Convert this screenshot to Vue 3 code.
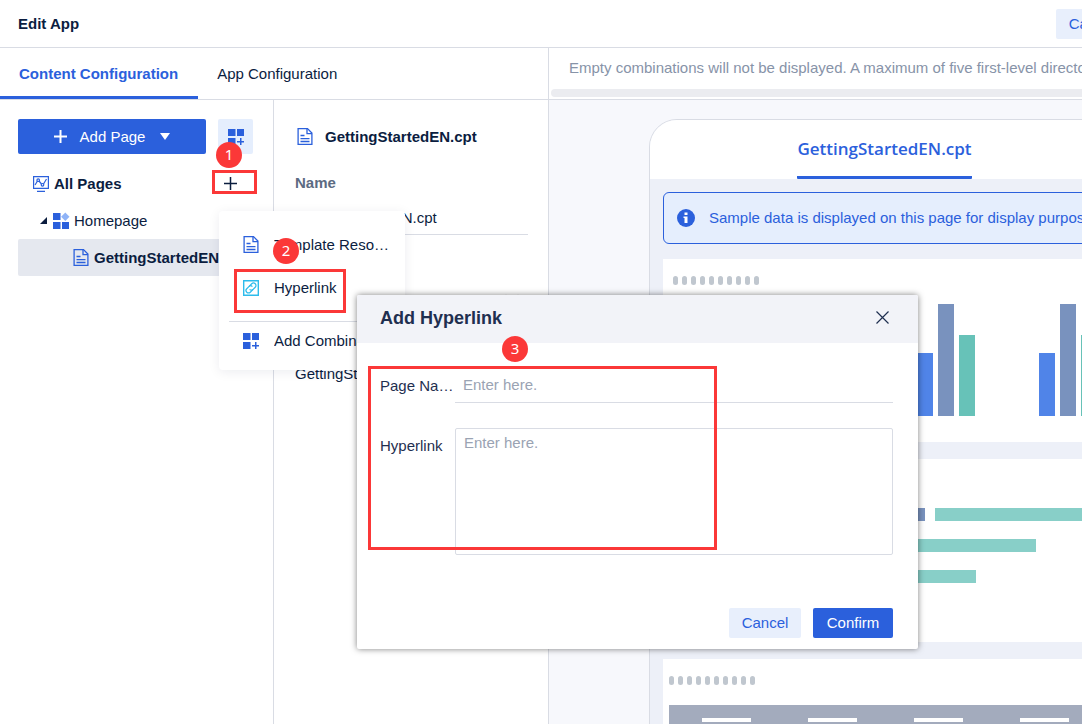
<script setup>
import { ref } from 'vue'

const tabs = ['Content Configuration', 'App Configuration']
const activeTab = ref(0)

const pageName = ref('')
const link = ref('')

// 預覽柱狀圖
const columnGroups = 4
const columns = [
  { height: 63, class: 'blue' },
  { height: 112, class: 'slate' },
  { height: 81, class: 'teal' }
]

// 預覽條形圖
const rows = [
  [{ width: 252, class: 'slate' }, { width: 164, class: 'mint' }],
  [{ width: 363, class: 'mint' }],
  [{ width: 303, class: 'mint' }]
]
</script>

<template>
  <div class="page">
    <div class="shell">
      <header class="topbar">
        <h1>Edit App</h1>
        <button class="btn btn-light" type="button">Cancel</button>
      </header>

      <div class="columns">
        <section class="config">
          <nav class="tabs">
            <button
              v-for="(tab, i) in tabs"
              :key="tab"
              type="button"
              class="tab"
              :class="{ active: activeTab === i }"
              @click="activeTab = i"
            >{{ tab }}</button>
          </nav>

          <div class="panels">
            <aside class="sidebar">
              <div class="toolbar">
                <button class="add-page" type="button">
                  <svg width="13" height="13" viewBox="0 0 13 13" stroke="currentColor" stroke-width="2"><path d="M6.500 0v13M0 6.500h13" /></svg>
                  <span>Add Page</span>
                  <svg class="drop" width="10" height="7" viewBox="0 0 10 7" fill="currentColor"><path d="M0 0h10L5 7z" /></svg>
                </button>
                <button class="combo" type="button" aria-label="Add Combination">
                  <svg class="icon" viewBox="0 0 16 16" fill="currentColor"><path d="M0 0h7.500v7H0zM9 0h7v7H9zM0 9h7.500v7H0zM12 9h1.500v3H16v1.500h-2.500V16H12v-2.500H9V12h3z" /></svg>
                </button>
              </div>

              <div class="node root">
                <svg class="icon" viewBox="0 0 16 16" fill="none" stroke="currentColor" stroke-width="1.200"><path d="M.6.6h14.800v11.800H.6zM4 15.400h8" /><path d="M2 9l2.500-4M6 5l2.500 3M10.500 8L13.500 3" /><circle cx="5.200" cy="4.200" r="1.300" /><circle cx="9.500" cy="8.800" r="1.300" /></svg>
                <span>All Pages</span>
                <button class="plus" type="button" aria-label="Add">
                  <svg width="13" height="13" viewBox="0 0 13 13" stroke="currentColor" stroke-width="1.500"><path d="M6.500 0v13M0 6.500h13" /></svg>
                </button>
              </div>
              <div class="node home">
                <svg class="caret" viewBox="0 0 7 7" fill="currentColor"><path d="M7 0v7H0z" /></svg>
                <svg class="icon" viewBox="0 0 16 16" fill="currentColor"><path d="M0 0h7.500v7H0zM0 9h7.500v7H0zM9 9h7v7H9z" /><path d="M12.300-.5l4.200 4.200-4.200 4.200-4.200-4.200z" fill="#8fb3f7" /></svg>
                <span>Homepage</span>
              </div>
              <div class="node leaf">
                <svg class="icon doc" viewBox="0 0 15 17" fill="none" stroke="currentColor" stroke-width="1.300"><path d="M.6.600h9.400l4.400 4.400v11.400H.6z" /><path d="M9.500.600v5h5M3 7.500h4M3 10.700h9M3 13.500h9" /></svg>
                <span>GettingStartedEN.cpt</span>
              </div>
            </aside>

            <section class="detail">
              <h2>
                <svg class="icon doc" viewBox="0 0 15 17" fill="none" stroke="currentColor" stroke-width="1.300"><path d="M.6.600h9.400l4.400 4.400v11.400H.6z" /><path d="M9.500.600v5h5M3 7.500h4M3 10.700h9M3 13.500h9" /></svg>
                <span>GettingStartedEN.cpt</span>
              </h2>
              <div class="caption">Name</div>
              <div class="value lined">GettingStartedEN.cpt</div>
              <div class="template-row">
                <svg width="22" height="14" viewBox="0 0 22 14" fill="none" stroke="currentColor" stroke-width="1.500"><path d="M2 8l4-5 4 5M14 8l4-5 4 5" /></svg>
              </div>
              <div class="value">GettingStartedEN.cpt</div>
            </section>
          </div>
        </section>

        <section class="preview">
          <div class="notice">
            <p>Empty combinations will not be displayed. A maximum of five first-level directories</p>
            <div class="scrollbar"></div>
          </div>

          <div class="stage">
            <div class="device">
              <div class="device-head"><span>GettingStartedEN.cpt</span></div>
              <div class="device-body">
                <div class="alert">
                  <svg width="18" height="18" viewBox="0 0 18 18"><circle cx="9" cy="9" r="9" fill="#2b60dc" /><path d="M7.500 3.500h3v2.500h-3zM6.500 7.500h4v6.500h-3V9h-1z" fill="#fff" /></svg>
                  <span>Sample data is displayed on this page for display purposes</span>
                </div>

                <div class="card">
                  <div class="dots"><i v-for="n in 10" :key="n"></i></div>
                  <div class="bar-chart">
                    <div v-for="g in columnGroups" :key="g" class="bar-group">
                      <i v-for="c in columns" :key="c.class" :class="c.class" :style="{ height: c.height + 'px' }"></i>
                    </div>
                  </div>
                </div>

                <div class="card row-chart">
                  <div v-for="(row, i) in rows" :key="i" class="bar-row">
                    <i v-for="b in row" :key="b.class" :class="b.class" :style="{ width: b.width + 'px' }"></i>
                  </div>
                </div>

                <div class="card table-card">
                  <div class="dots"><i v-for="n in 10" :key="n"></i></div>
                  <div class="table-head"><i v-for="n in 4" :key="n"></i></div>
                </div>
              </div>
            </div>
          </div>
        </section>
      </div>
    </div>

    <div class="menu">
      <button type="button" class="menu-item">
        <svg class="icon doc" viewBox="0 0 15 17" fill="none" stroke="currentColor" stroke-width="1.300"><path d="M.6.600h9.400l4.400 4.400v11.400H.6z" /><path d="M9.500.600v5h5M3 7.500h4M3 10.700h9M3 13.500h9" /></svg>
        <span>Template Resource</span>
      </button>
      <button type="button" class="menu-item">
        <svg class="icon cyan" viewBox="0 0 16 16" fill="none" stroke="currentColor"><path d="M.7.7h14.600v14.600H.7z" stroke-width="1.400" /><g transform="rotate(-45 8 8)" stroke-width="1.200"><path d="M8.500 10.500H4.500a2.500 2.500 0 0 1 0-5h3a2.500 2.500 0 0 1 2.500 2.500" /><path d="M7.500 5.500h4a2.500 2.500 0 0 1 0 5h-3A2.500 2.500 0 0 1 6 8" /></g></svg>
        <span>Hyperlink</span>
      </button>
      <hr />
      <button type="button" class="menu-item">
        <svg class="icon" viewBox="0 0 16 16" fill="currentColor"><path d="M0 0h7.500v7H0zM9 0h7v7H9zM0 9h7.500v7H0zM12 9h1.500v3H16v1.500h-2.500V16H12v-2.500H9V12h3z" /></svg>
        <span>Add Combination</span>
      </button>
    </div>

    <form class="dialog" role="dialog" aria-labelledby="dialog-title" @submit.prevent>
      <header>
        <h2 id="dialog-title">Add Hyperlink</h2>
        <button type="button" class="close" aria-label="Close">
          <svg width="13" height="13" viewBox="0 0 13 13" stroke="currentColor" stroke-width="1.200"><path d="M.5.5l12 12M12.500.5l-12 12" /></svg>
        </button>
      </header>
      <div class="fields">
        <label for="page-name">Page Name</label>
        <input id="page-name" v-model="pageName" type="text" placeholder="Enter here." />
        <label for="page-link">Hyperlink</label>
        <textarea id="page-link" v-model="link" placeholder="Enter here."></textarea>
      </div>
      <footer>
        <button type="button" class="btn btn-light">Cancel</button>
        <button type="submit" class="btn btn-primary">Confirm</button>
      </footer>
    </form>

    <!-- 步驟標註 -->
    <div class="mark mark-1"></div>
    <div class="mark mark-2"></div>
    <div class="mark mark-3"></div>
    <span class="step step-1">1</span>
    <span class="step step-2">2</span>
    <span class="step step-3">3</span>
  </div>
</template>

<style>
body {
  background: #fff;
}
</style>

<style scoped>
* {
  box-sizing: border-box;
}

.page {
  position: relative;
  height: 100vh;
  overflow: hidden;
  font-family: "Liberation Sans", Arial, sans-serif;
  font-size: 15px;
  line-height: 20px;
  color: #0b1d3f;
}

.shell {
  display: flex;
  flex-direction: column;
  min-width: 1220px;
  height: 100%;
}

h1, h2, p {
  margin: 0;
  font-size: 15px;
}

button, input, textarea {
  font: inherit;
  color: inherit;
  border: none;
  background: none;
  padding: 0;
  outline: none;
}

button {
  cursor: pointer;
}

svg {
  flex-shrink: 0;
  overflow: visible;
}

.icon {
  width: 16px;
  height: 16px;
  color: #2b60dc;
}

.icon.doc {
  height: 17px;
}

.icon.cyan {
  color: #2dbcec;
}

.btn {
  height: 30px;
  border-radius: 2px;
}

.btn-light {
  width: 72px;
  background: #e8effc;
  color: #2b60dc;
}

.btn-primary {
  width: 80px;
  background: #2b60dc;
  color: #fff;
}

/* 頂欄 */
.topbar {
  display: flex;
  align-items: center;
  justify-content: space-between;
  height: 48px;
  padding: 0 92px 0 18px;
  border-bottom: 1px solid #d9dce4;
}

.columns {
  display: flex;
  flex: 1;
  min-height: 0;
}

.config {
  display: flex;
  flex-direction: column;
  width: 549px;
  border-right: 1px solid #d9dce4;
}

.tabs {
  display: flex;
  height: 52px;
  border-bottom: 1px solid #d9dce4;
}

.tab {
  padding: 3px 20px 0 19px;
  border-bottom: 3px solid transparent;
}

.tab.active {
  font-weight: bold;
  color: #2b60dc;
  border-color: #2b60dc;
}

.panels {
  display: flex;
  flex: 1;
}

/* 側欄 */
.sidebar {
  width: 274px;
  padding: 19px 20px 0 18px;
  border-right: 1px solid #d9dce4;
}

.toolbar {
  display: flex;
  gap: 12px;
  margin-bottom: 11px;
}

.add-page {
  display: flex;
  align-items: center;
  justify-content: center;
  gap: 13px;
  width: 188px;
  height: 35px;
  border-radius: 2px;
  background: #2b60dc;
  color: #fff;
}

.drop {
  margin-left: 2px;
}

.combo {
  display: flex;
  align-items: center;
  justify-content: center;
  width: 35px;
  height: 35px;
  border-radius: 2px;
  background: #e5eefd;
}

.node {
  display: flex;
  align-items: center;
  gap: 5px;
  height: 37px;
  white-space: nowrap;
}

.root {
  padding: 0 16px 0 15px;
  font-weight: bold;
}

.plus {
  display: flex;
  margin-left: auto;
}

.home {
  padding-left: 22px;
}

.caret {
  width: 7px;
  height: 7px;
  margin-right: 1px;
}

.leaf {
  padding-left: 55px;
  border-radius: 2px;
  overflow: hidden;
  background: #e5e8ef;
  font-weight: bold;
}

/* 詳情 */
.detail {
  flex: 1;
  padding: 19px 20px 0 21px;
}

.detail h2 {
  display: flex;
  align-items: center;
  gap: 12px;
  height: 35px;
  padding-left: 2px;
}

.caption {
  padding-top: 19px;
  font-weight: bold;
  color: #5c6b82;
}

.value {
  padding: 15px 0 6px;
}

.lined {
  border-bottom: 1px solid #d9dce4;
}

.template-row {
  display: flex;
  justify-content: flex-end;
  align-items: flex-end;
  height: 114px;
  padding: 0 6px 42px;
}

/* 預覽 */
.preview {
  display: flex;
  flex-direction: column;
  flex: 1;
  min-width: 0;
}

.notice {
  display: flex;
  flex-direction: column;
  justify-content: space-between;
  height: 52px;
  padding: 10px 0 2px 2px;
  border-bottom: 1px solid #d9dce4;
  color: #8793a8;
}

.notice p {
  padding-left: 18px;
  font-weight: normal;
  white-space: nowrap;
}

.scrollbar {
  height: 8px;
  border-radius: 4px;
  background: #ebecf0;
}

.stage {
  flex: 1;
  min-height: 0;
  padding: 19px 100px 0;
  background: #f7f8fc;
}

.device {
  border: 1px solid #d9dce4;
  border-radius: 28px 28px 0 0;
  overflow: hidden;
  background: #edf0f8;
}

.device-head {
  display: flex;
  justify-content: center;
  height: 59px;
  background: #fff;
}

.device-head span {
  padding-top: 19px;
  border-bottom: 3px solid #2b60dc;
  border-radius: 1px;
  font-family: "Open Sans", "Noto Sans", sans-serif;
  font-size: 17px;
  font-weight: 600;
  color: #2b60dc;
}

.device-body {
  padding: 13px;
}

.alert {
  display: flex;
  align-items: center;
  gap: 14px;
  height: 52px;
  margin-bottom: 15px;
  padding: 0 13px;
  border: 1px solid #2b60dc;
  border-radius: 6px;
  background: #e5eefd;
  color: #2b60dc;
  white-space: nowrap;
  overflow: hidden;
}

.card {
  height: 183px;
  margin-bottom: 17px;
  padding: 17px 10px 0;
  background: #fff;
  overflow: hidden;
}

.dots {
  display: flex;
  gap: 4px;
}

.dots i {
  width: 5px;
  height: 9px;
  border-radius: 3px;
  background: #c0c7cf;
}

.bar-chart {
  display: flex;
  gap: 64px;
  height: 131px;
}

.bar-group {
  display: flex;
  align-items: flex-end;
  gap: 5px;
}

.bar-group i {
  width: 16px;
}

.row-chart {
  display: flex;
  flex-direction: column;
  gap: 18px;
  padding-top: 49px;
}

.bar-row {
  display: flex;
  gap: 10px;
}

.bar-row i {
  flex-shrink: 0;
  height: 13px;
}

.blue {
  background: #5084e8;
}

.slate {
  background: #7992be;
}

.teal {
  background: #67c2b8;
}

.mint {
  background: #88cfc8;
}

.table-card {
  padding: 17px 6px 0;
}

.table-head {
  display: flex;
  gap: 57px;
  height: 40px;
  margin-top: 20px;
  padding: 13px 33px;
  background: #a3abbd;
}

.table-head i {
  flex-shrink: 0;
  width: 49px;
  height: 4px;
  background: #fff;
}

/* 下拉選單 */
.menu {
  position: absolute;
  left: 219px;
  top: 211px;
  width: 186px;
  padding: 15px 10px 11px;
  border-radius: 4px;
  background: #fff;
  box-shadow: 0 2px 12px rgba(11, 29, 63, 0.08);
}

.menu-item {
  display: flex;
  align-items: center;
  gap: 15px;
  width: 100%;
  height: 37px;
  padding: 0 3px 0 14px;
  text-align: left;
}

.menu-item + .menu-item {
  margin-top: 6px;
}

.menu-item span {
  overflow: hidden;
  text-overflow: ellipsis;
  white-space: nowrap;
}

.menu hr {
  margin: 15px 0 0;
  border: none;
  border-top: 1px solid #d9dce4;
}

/* 對話框 */
.dialog {
  position: absolute;
  left: 357px;
  top: 295px;
  width: 561px;
  border-radius: 2px;
  background: #fff;
  box-shadow: 0 0 6px rgba(0, 0, 0, 0.5);
  color: #1f2f50;
}

.dialog header {
  display: flex;
  align-items: center;
  justify-content: space-between;
  height: 48px;
  padding: 0 29px 3px 23px;
  border-radius: 2px 2px 0 0;
  background: #f2f3f8;
}

.dialog h2 {
  font-size: 18px;
}

.close {
  display: flex;
}

.fields {
  display: grid;
  grid-template-columns: 75px 1fr;
  row-gap: 25px;
  padding: 25px 25px 0 23px;
}

.fields label {
  padding-top: 8px;
  overflow: hidden;
  text-overflow: ellipsis;
  white-space: nowrap;
}

.fields input {
  height: 35px;
  padding: 0 8px 2px;
  border-bottom: 1px solid #d9dce4;
}

.fields textarea {
  display: block;
  height: 127px;
  padding: 4px 8px;
  border: 1px solid #d9dce4;
  border-radius: 2px;
  resize: none;
}

.fields ::placeholder {
  color: #9aa3b3;
}

.dialog footer {
  display: flex;
  justify-content: flex-end;
  gap: 12px;
  padding: 53px 25px 11px;
}

/* 標註 */
.mark {
  position: absolute;
  border: 3px solid #fb3838;
  pointer-events: none;
}

.mark-1 {
  left: 212px;
  top: 170px;
  width: 45px;
  height: 24px;
}

.mark-2 {
  left: 234px;
  top: 269px;
  width: 112px;
  height: 44px;
}

.mark-3 {
  left: 368px;
  top: 366px;
  width: 349px;
  height: 184px;
}

.step {
  position: absolute;
  width: 26px;
  height: 26px;
  border-radius: 50%;
  background: #fb3838;
  color: #fff;
  font-family: "Noto Sans", sans-serif;
  line-height: 24px;
  text-align: center;
}

.step-1 {
  left: 216px;
  top: 142px;
}

.step-2 {
  left: 273px;
  top: 238px;
}

.step-3 {
  left: 502px;
  top: 336px;
}
</style>
